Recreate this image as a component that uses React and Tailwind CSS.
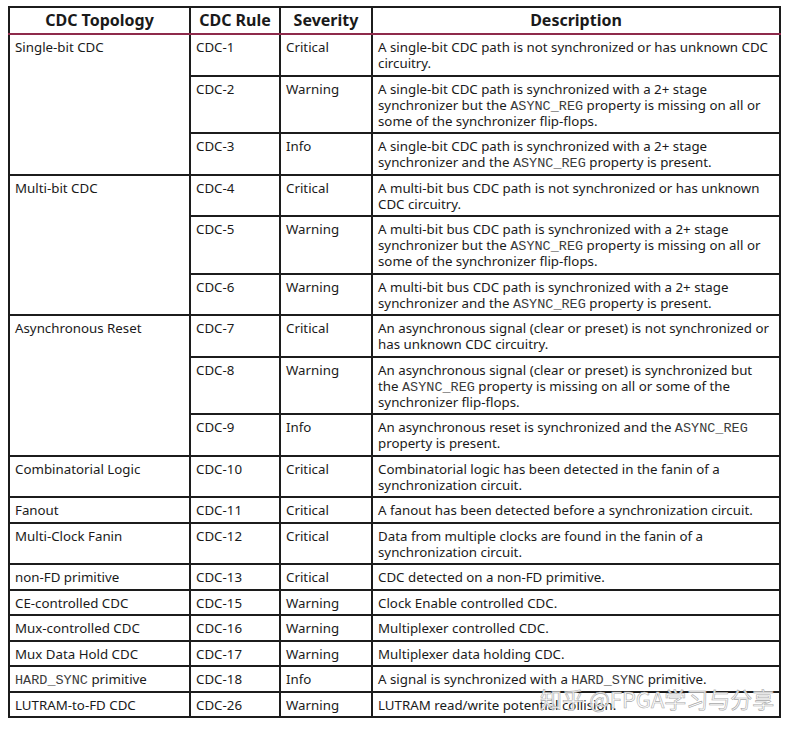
const M = ({ children }) => (
  <span className="font-['Liberation_Mono',monospace] text-[13.5px] leading-[10px] text-[#3c3c3c]">{children}</span>
);

const groups = [
  {
    topo: "Single-bit CDC",
    rows: [
      ["CDC-1", "Critical", <>A single-bit CDC path is not synchronized or has unknown CDC circuitry.</>],
      ["CDC-2", "Warning", <>A single-bit CDC path is synchronized with a 2+ stage synchronizer but the <M>ASYNC_REG</M> property is missing on all or some of the synchronizer flip-flops.</>],
      ["CDC-3", "Info", <>A single-bit CDC path is synchronized with a 2+ stage synchronizer and the <M>ASYNC_REG</M> property is present.</>],
    ],
  },
  {
    topo: "Multi-bit CDC",
    rows: [
      ["CDC-4", "Critical", <>A multi-bit bus CDC path is not synchronized or has unknown CDC circuitry.</>],
      ["CDC-5", "Warning", <>A multi-bit bus CDC path is synchronized with a 2+ stage synchronizer but the <M>ASYNC_REG</M> property is missing on all or some of the synchronizer flip-flops.</>],
      ["CDC-6", "Warning", <>A multi-bit bus CDC path is synchronized with a 2+ stage synchronizer and the <M>ASYNC_REG</M> property is present.</>],
    ],
  },
  {
    topo: "Asynchronous Reset",
    rows: [
      ["CDC-7", "Critical", <>An asynchronous signal (clear or preset) is not synchronized or has unknown CDC circuitry.</>],
      ["CDC-8", "Warning", <>An asynchronous signal (clear or preset) is synchronized but the <M>ASYNC_REG</M> property is missing on all or some of the synchronizer flip-flops.</>],
      ["CDC-9", "Info", <>An asynchronous reset is synchronized and the <M>ASYNC_REG</M> property is present.</>],
    ],
  },
  { topo: "Combinatorial Logic", rows: [["CDC-10", "Critical", <>Combinatorial logic has been detected in the fanin of a synchronization circuit.</>]] },
  { topo: "Fanout", rows: [["CDC-11", "Critical", <>A fanout has been detected before a synchronization circuit.</>]] },
  { topo: "Multi-Clock Fanin", rows: [["CDC-12", "Critical", <>Data from multiple clocks are found in the fanin of a synchronization circuit.</>]] },
  { topo: "non-FD primitive", rows: [["CDC-13", "Critical", <>CDC detected on a non-FD primitive.</>]] },
  { topo: "CE-controlled CDC", rows: [["CDC-15", "Warning", <>Clock Enable controlled CDC.</>]] },
  { topo: "Mux-controlled CDC", rows: [["CDC-16", "Warning", <>Multiplexer controlled CDC.</>]] },
  { topo: "Mux Data Hold CDC", rows: [["CDC-17", "Warning", <>Multiplexer data holding CDC.</>]] },
  { topo: <><M>HARD_SYNC</M> primitive</>, rows: [["CDC-18", "Info", <>A signal is synchronized with a <M>HARD_SYNC</M> primitive.</>]] },
  { topo: "LUTRAM-to-FD CDC", rows: [["CDC-26", "Warning", <>LUTRAM read/write potential collision.</>]] },
];

const td = "border-2 border-[#1c1c1c] align-top pl-[5px] pr-[3px] pt-[4px] pb-[3.5px]";
const th = "border-2 border-[#1c1c1c] border-b-[#8e2a4b] font-bold text-[16px] leading-[20px] pt-[2px] pb-[3px] text-center";

export default function App() {
  return (
    <div className="relative w-[794px] h-[730px] bg-white pt-[6px] pl-[8px] font-['Noto_Sans',sans-serif] text-[13.3px] leading-[16px] text-[#1a1a1a]">
      <table className="border-collapse table-fixed w-[771px]">
        <colgroup>
          <col className="w-[181px]" />
          <col className="w-[90px]" />
          <col className="w-[92px]" />
          <col className="w-[408px]" />
        </colgroup>
        <thead>
          <tr>
            <th className={th}>CDC Topology</th>
            <th className={th}>CDC Rule</th>
            <th className={th}>Severity</th>
            <th className={th}>Description</th>
          </tr>
        </thead>
        <tbody>
          {groups.map((g, gi) =>
            g.rows.map((r, ri) => (
              <tr key={gi + "-" + ri}>
                {ri === 0 && (
                  <td className={td} rowSpan={g.rows.length}>
                    {g.topo}
                  </td>
                )}
                <td className={td}>{r[0]}</td>
                <td className={td}>{r[1]}</td>
                <td className={td}>{r[2]}</td>
              </tr>
            ))
          )}
        </tbody>
      </table>
      <div className="absolute left-[540px] top-[684px] text-[22px] leading-[28px] text-white/90 [-webkit-text-stroke:0.6px_#a8a8a8] font-['Noto_Sans_CJK_SC',sans-serif] whitespace-nowrap">
        知乎 @FPGA学习与分享
      </div>
    </div>
  );
}
